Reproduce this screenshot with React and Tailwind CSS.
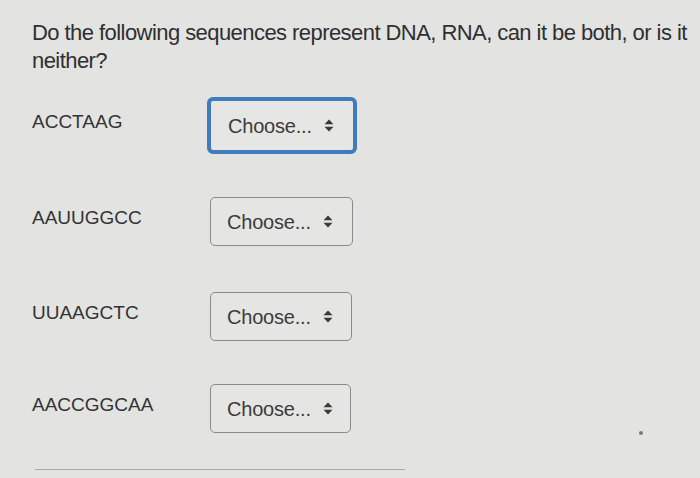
import React from "react";

function Arrows() {
  return (
    <svg width="10" height="13" viewBox="0 0 10 13" className="ml-[12px]">
      <path d="M5 0.5 L9.5 5.2 L0.5 5.2 Z" fill="#3a3a3c" />
      <path d="M5 12.5 L9.5 7.8 L0.5 7.8 Z" fill="#3a3a3c" />
    </svg>
  );
}

function Select({ focused, w }) {
  if (focused) {
    return (
      <div className="ml-[-3px] rounded-[6px] border-[4px] border-[#3f7cbc] w-[150px] h-[57px] flex items-center pl-[17px] bg-[#e6e6e4]">
        <span className="text-[20px] text-[#3b3b3d] tracking-[-0.2px]">Choose...</span>
        <Arrows />
      </div>
    );
  }
  return (
    <div className={`rounded-[5px] border border-[#8a8a8c] ${w} h-[49px] flex items-center pl-[16px] bg-[#e5e5e3]`}>
      <span className="text-[20px] text-[#3b3b3d] tracking-[-0.2px]">Choose...</span>
      <Arrows />
    </div>
  );
}

export default function App() {
  const rows = [
    { label: "ACCTAAG", focused: true, w: "w-[144px]", mt: "mt-[22px]" },
    { label: "AAUUGGCC", w: "w-[143px]", mt: "mt-[43px]" },
    { label: "UUAAGCTC", w: "w-[142px]", mt: "mt-[46px]" },
    { label: "AACCGGCAA", w: "w-[141px]", mt: "mt-[43px]" },
  ];
  return (
    <div
      className="w-[700px] h-[478px] bg-[#e3e3e1] overflow-hidden relative"
      style={{ fontFamily: '"Liberation Sans", Arial, sans-serif' }}
    >
      <div className="pl-[32px] pt-[19px]">
        <p className="text-[22px] leading-[28px] text-[#2f2f31] tracking-[-0.56px] w-[662px]">
          Do the following sequences represent DNA, RNA, can it be both, or is it
          <br />
          neither?
        </p>
        {rows.map((r, i) => (
          <div key={i} className={`flex items-center ${r.mt}`}>
            <span className="w-[178px] text-[19px] text-[#333335] tracking-[0px] mt-[-6px]">{r.label}</span>
            <Select focused={r.focused} w={r.w} />
          </div>
        ))}
      </div>
      <div className="absolute left-[35px] top-[469px] w-[370px] h-[1px] bg-[#a9a9a9]" />
      <div className="absolute left-[639px] top-[431px] w-[4px] h-[4px] rounded-full bg-[#7a7a7a]" />
    </div>
  );
}
